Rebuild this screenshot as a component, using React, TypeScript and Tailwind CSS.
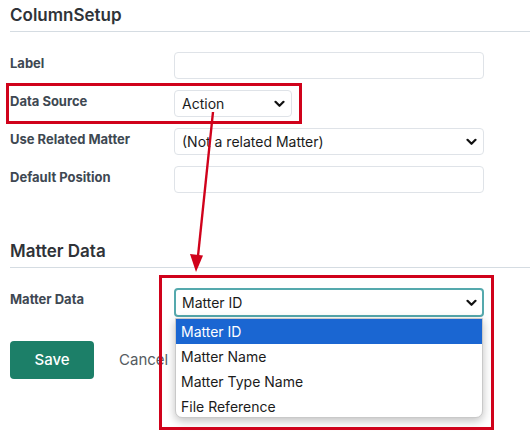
import React from "react";

function Chevron() {
  return (
    <svg width="11" height="8" viewBox="0 0 11 8" className="shrink-0">
      <path d="M1.5 1.8 L5.5 5.8 L9.5 1.8" fill="none" stroke="#111" strokeWidth="2.2" strokeLinecap="round" strokeLinejoin="round" />
    </svg>
  );
}

function Row({ label, children }: { label: string; children: React.ReactNode }) {
  return (
    <div className="flex items-start h-[27px]">
      <div className="w-[164px] pt-[3px] text-[13px] font-bold text-[#3e4852] leading-[16px]">{label}</div>
      {children}
    </div>
  );
}

function Input({ w = "w-[310px]" }: { w?: string }) {
  return <div className={`${w} h-[27px] rounded-[4px] border border-[#dfe3e8] bg-white`} />;
}

function Select({ value, w = "w-[310px]" }: { value: string; w?: string }) {
  return (
    <div className={`${w} h-[27px] rounded-[4px] border border-[#dfe3e8] bg-white flex items-center justify-between pl-[7px] pr-[6px] text-[14px] text-[#1b1b1b]`}>
      <span>{value}</span>
      <Chevron />
    </div>
  );
}

export default function App() {
  return (
    <div className="relative w-[530px] h-[437px] overflow-hidden bg-white" style={{ fontFamily: "Inter, 'Noto Sans', sans-serif" }}>
      <div className="pl-[10px]">
        <div className="pt-[4px] h-[32px] border-b border-[#d5dce2] text-[17px] font-semibold text-[#2f3338] leading-[22px]">ColumnSetup</div>
        <div className="pt-[20px] flex flex-col gap-[11px]">
          <Row label="Label"><Input /></Row>
          <Row label="Data Source"><Select value="Action" w="w-[118px]" /></Row>
          <Row label="Use Related Matter"><Select value="(Not a related Matter)" /></Row>
          <Row label="Default Position"><Input /></Row>
        </div>
        <div className="mt-[47px] h-[28px] border-b border-[#d5dce2] text-[17px] font-semibold text-[#2f3338] leading-[22px]">Matter Data</div>
        <div className="pt-[20px] flex items-start">
          <div className="w-[164px] pt-[3px] text-[13px] font-bold text-[#3e4852] leading-[16px]">Matter Data</div>
          <div className="w-[310px] h-[29px] rounded-[4px] border-2 border-[#55a9ad] bg-white flex items-center justify-between pl-[6px] pr-[5px] text-[14px] text-[#1b1b1b]">
            <span>Matter ID</span>
            <Chevron />
          </div>
        </div>
        <div className="mt-[24px] flex items-center gap-[25px]">
          <div className="w-[84px] h-[38px] rounded-[4px] bg-[#1c7f68] text-white text-[15px] font-medium flex items-center justify-center">Save</div>
          <div className="text-[15px] text-[#555b61]">Cancel</div>
        </div>
      </div>

      {/* dropdown list */}
      <div className="absolute left-[175px] top-[318px] w-[308px] h-[100px] bg-white rounded-b-[7px] border border-[#c9c9c9] shadow-[0_3px_10px_rgba(0,0,0,0.25)] overflow-hidden text-[14px] text-[#1b1b1b]">
        <div className="h-[25px] bg-[#1a66d2] text-white flex items-center pl-[5px]">Matter ID</div>
        <div className="h-[25px] flex items-center pl-[5px]">Matter Name</div>
        <div className="h-[25px] flex items-center pl-[5px]">Matter Type Name</div>
        <div className="h-[25px] flex items-center pl-[5px]">File Reference</div>
      </div>

      {/* annotations */}
      <div className="absolute left-[6px] top-[83px] w-[296px] h-[41px] border-[3px] border-[#d0021b]" />
      <div className="absolute left-[159px] top-[275px] w-[335px] h-[155px] border-[3px] border-[#d0021b]" />
      <svg className="absolute left-0 top-0" width="530" height="437" viewBox="0 0 530 437">
        <line x1="213" y1="112" x2="198" y2="256" stroke="#d0021b" strokeWidth="2.4" />
        <polygon points="190,254 203,255.5 196,272" fill="#d0021b" />
      </svg>
    </div>
  );
}
